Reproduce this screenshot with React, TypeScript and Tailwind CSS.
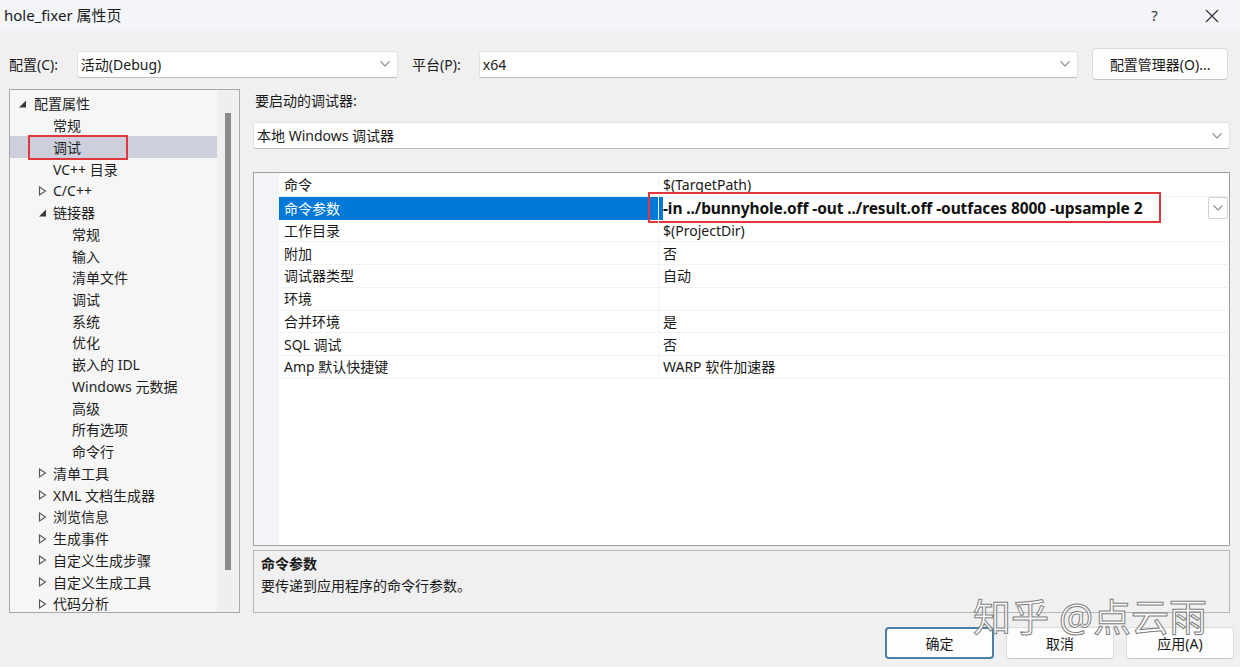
import React from 'react'

const font = { fontFamily: '"Noto Sans", "Noto Sans CJK SC", sans-serif' }

function Chevron({ className = '' }: { className?: string }) {
  return (
    <svg className={className} width="12" height="8" viewBox="0 0 12 8" fill="none">
      <polyline points="1.5,1.5 6,6 10.5,1.5" stroke="#8a8a8a" strokeWidth="1.1" />
    </svg>
  )
}

function Combo({ value, className = '' }: { value: string; className?: string }) {
  return (
    <div className={`flex h-[27px] items-center justify-between rounded-[3px] border border-[#e2e2e2] border-b-[#bdbdbd] bg-white pl-[3px] pr-[6px] text-[14px] text-[#1a1a1a] ${className}`}>
      <span>{value}</span>
      <Chevron />
    </div>
  )
}

type Node = { label: string; level: number; arrow?: 'open' | 'closed'; selected?: boolean }

const tree: Node[] = [
  { label: '配置属性', level: 0, arrow: 'open' },
  { label: '常规', level: 1 },
  { label: '调试', level: 1, selected: true },
  { label: 'VC++ 目录', level: 1 },
  { label: 'C/C++', level: 1, arrow: 'closed' },
  { label: '链接器', level: 1, arrow: 'open' },
  { label: '常规', level: 2 },
  { label: '输入', level: 2 },
  { label: '清单文件', level: 2 },
  { label: '调试', level: 2 },
  { label: '系统', level: 2 },
  { label: '优化', level: 2 },
  { label: '嵌入的 IDL', level: 2 },
  { label: 'Windows 元数据', level: 2 },
  { label: '高级', level: 2 },
  { label: '所有选项', level: 2 },
  { label: '命令行', level: 2 },
  { label: '清单工具', level: 1, arrow: 'closed' },
  { label: 'XML 文档生成器', level: 1, arrow: 'closed' },
  { label: '浏览信息', level: 1, arrow: 'closed' },
  { label: '生成事件', level: 1, arrow: 'closed' },
  { label: '自定义生成步骤', level: 1, arrow: 'closed' },
  { label: '自定义生成工具', level: 1, arrow: 'closed' },
  { label: '代码分析', level: 1, arrow: 'closed' },
]

const props: [string, string][] = [
  ['命令', '$(TargetPath)'],
  ['命令参数', '-in ../bunnyhole.off -out ../result.off -outfaces 8000 -upsample 2'],
  ['工作目录', '$(ProjectDir)'],
  ['附加', '否'],
  ['调试器类型', '自动'],
  ['环境', ''],
  ['合并环境', '是'],
  ['SQL 调试', '否'],
  ['Amp 默认快捷键', 'WARP 软件加速器'],
]

function Arrow({ kind }: { kind: 'open' | 'closed' }) {
  if (kind === 'open') {
    return (
      <svg width="9" height="9" viewBox="0 0 9 9">
        <polygon points="8,1 8,8 1,8" fill="#3a3a3a" />
      </svg>
    )
  }
  return (
    <svg width="9" height="10" viewBox="0 0 9 10">
      <polygon points="1.5,1 7.5,5 1.5,9" fill="none" stroke="#555" strokeWidth="1.1" />
    </svg>
  )
}

function TreeRow({ n }: { n: Node }) {
  const textLeft = n.level === 0 ? 'pl-[24px]' : n.level === 1 ? 'pl-[43px]' : 'pl-[62px]'
  const arrowLeft = n.level === 0 ? 'left-[8px]' : 'left-[28px]'
  return (
    <div className={`relative flex h-[21.74px] items-center text-[14px] text-[#1e1e1e] ${textLeft} ${n.selected ? 'bg-[#cdd0dc]' : ''}`}>
      {n.arrow && (
        <span className={`absolute top-1/2 -translate-y-1/2 ${arrowLeft} flex items-center`}>
          <Arrow kind={n.arrow} />
        </span>
      )}
      <span className={n.selected ? 'relative' : ''}>
        {n.label}
        {n.selected && (
          <span className="absolute -left-[25px] -top-[2px] h-[25px] w-[100px] border-2 border-[#e0363c]" />
        )}
      </span>
    </div>
  )
}

export default function App() {
  return (
    <div className="relative flex h-[667px] w-[1240px] flex-col overflow-hidden bg-[#f0f0f0]" style={font}>
      {/* Title bar */}
      <div className="flex h-[31px] items-center justify-between bg-[#f3f5f9] pl-[4px]">
        <span className="text-[15px] text-[#1a1a1a]">hole_fixer 属性页</span>
        <div className="flex items-center">
          <span className="w-[57px] text-center text-[15px] text-[#333]">?</span>
          <span className="flex w-[57px] justify-center">
            <svg width="14" height="14" viewBox="0 0 14 14">
              <path d="M1 1 L13 13 M13 1 L1 13" stroke="#333" strokeWidth="1.2" />
            </svg>
          </span>
        </div>
      </div>

      {/* Config row */}
      <div className="mt-[17px] flex h-[32px] items-center pl-[9px] pr-[12px] text-[14px] text-[#1a1a1a]">
        <span className="w-[68px]">配置(C):</span>
        <Combo value="活动(Debug)" className="w-[322px]" />
        <span className="ml-[14px] w-[67px]">平台(P):</span>
        <Combo value="x64" className="w-[601px]" />
        <button className="ml-[14px] h-[32px] w-[136px] rounded-[4px] border border-[#dcdcdc] border-b-[#c4c4c4] bg-[#fdfdfd] text-[14px] text-[#1a1a1a]">
          配置管理器(O)...
        </button>
      </div>

      {/* Main */}
      <div className="mt-[9px] flex h-[524px] pl-[9px] pr-[10px]">
        {/* Tree */}
        <div className="flex h-full w-[231px] border border-[#a9a9a9] bg-[#f6f6f6]">
          <div className="flex-1 overflow-hidden pt-[3px]">
            {tree.map((n, i) => (
              <TreeRow key={i} n={n} />
            ))}
          </div>
          <div className="flex w-[22px] justify-center bg-[#efefef] pt-[23px]">
            <div className="h-[457px] w-[6px] bg-[#8b8b8b]" />
          </div>
        </div>

        {/* Right column */}
        <div className="ml-[13px] flex flex-1 flex-col">
          <div className="mt-[1px] h-[22px] pl-[2px] text-[14px] leading-[22px] text-[#1a1a1a]">要启动的调试器:</div>
          <Combo value="本地 Windows 调试器" className="mt-[10px] w-full" />

          {/* Property grid */}
          <div className="mt-[23px] flex h-[374px] border border-[#a0a0a0] bg-white">
            <div className="w-[25px] bg-[#f3f4f7]" />
            <div className="flex-1 pt-[1px]">
              {props.map(([k, v], i) => {
                const sel = i === 1
                return (
                  <div key={i} className="flex h-[22.75px] text-[14px]">
                    <div className={`flex w-[379px] items-center pl-[5px] ${sel ? 'bg-[#0078d7] text-white' : 'border-b border-[#f2f2f2] text-[#1a1a1a]'}`}>
                      {k}
                    </div>
                    <div className={`relative flex flex-1 items-center border-l border-[#f2f2f2] ${sel ? '' : 'border-b'}`}>
                      {sel && <div className="h-full w-[4px] bg-[#0078d7]" />}
                      <span className={`${sel ? 'text-[15.5px] font-bold tracking-[-0.1px] text-[#111]' : 'pl-[4px] text-[#1a1a1a]'}`}>{v}</span>
                      {sel && (
                        <>
                          <span className="absolute -left-[11px] -top-[5px] h-[31px] w-[513px] border-2 border-[#e0363c]" />
                          <span className="absolute right-[1px] top-0 flex h-[22px] w-[20px] items-center justify-center rounded-[2px] border border-[#d0d0d0] bg-white">
                            <Chevron />
                          </span>
                        </>
                      )}
                    </div>
                  </div>
                )
              })}
            </div>
          </div>

          {/* Description */}
          <div className="mt-[4px] flex h-[63px] flex-col border border-[#b8b8b8] bg-[#f0f0f0] pl-[7px] pt-[2px] text-[14px] text-[#1a1a1a]">
            <span className="font-semibold leading-[22px]">命令参数</span>
            <span className="leading-[22px]">要传递到应用程序的命令行参数。</span>
          </div>
        </div>
      </div>

      {/* Buttons */}
      <div className="mt-[14px] flex justify-end gap-[12px] pr-[6px] text-[14px] text-[#1a1a1a]">
        <button className="h-[32px] w-[109px] rounded-[4px] border-2 border-[#4a7fa8] bg-[#fdfdfd]">确定</button>
        <button className="h-[32px] w-[108px] rounded-[4px] border border-[#dcdcdc] border-b-[#c4c4c4] bg-[#fdfdfd]">取消</button>
        <button className="h-[32px] w-[108px] rounded-[4px] border border-[#dcdcdc] border-b-[#c4c4c4] bg-[#fdfdfd]">应用(A)</button>
      </div>

      {/* Watermark */}
      <div className="pointer-events-none absolute left-[973px] top-[597px] text-[38px] leading-none text-white/85 [-webkit-text-stroke:1px_#7f7f7f]">
        知乎 @点云雨
      </div>
    </div>
  )
}
